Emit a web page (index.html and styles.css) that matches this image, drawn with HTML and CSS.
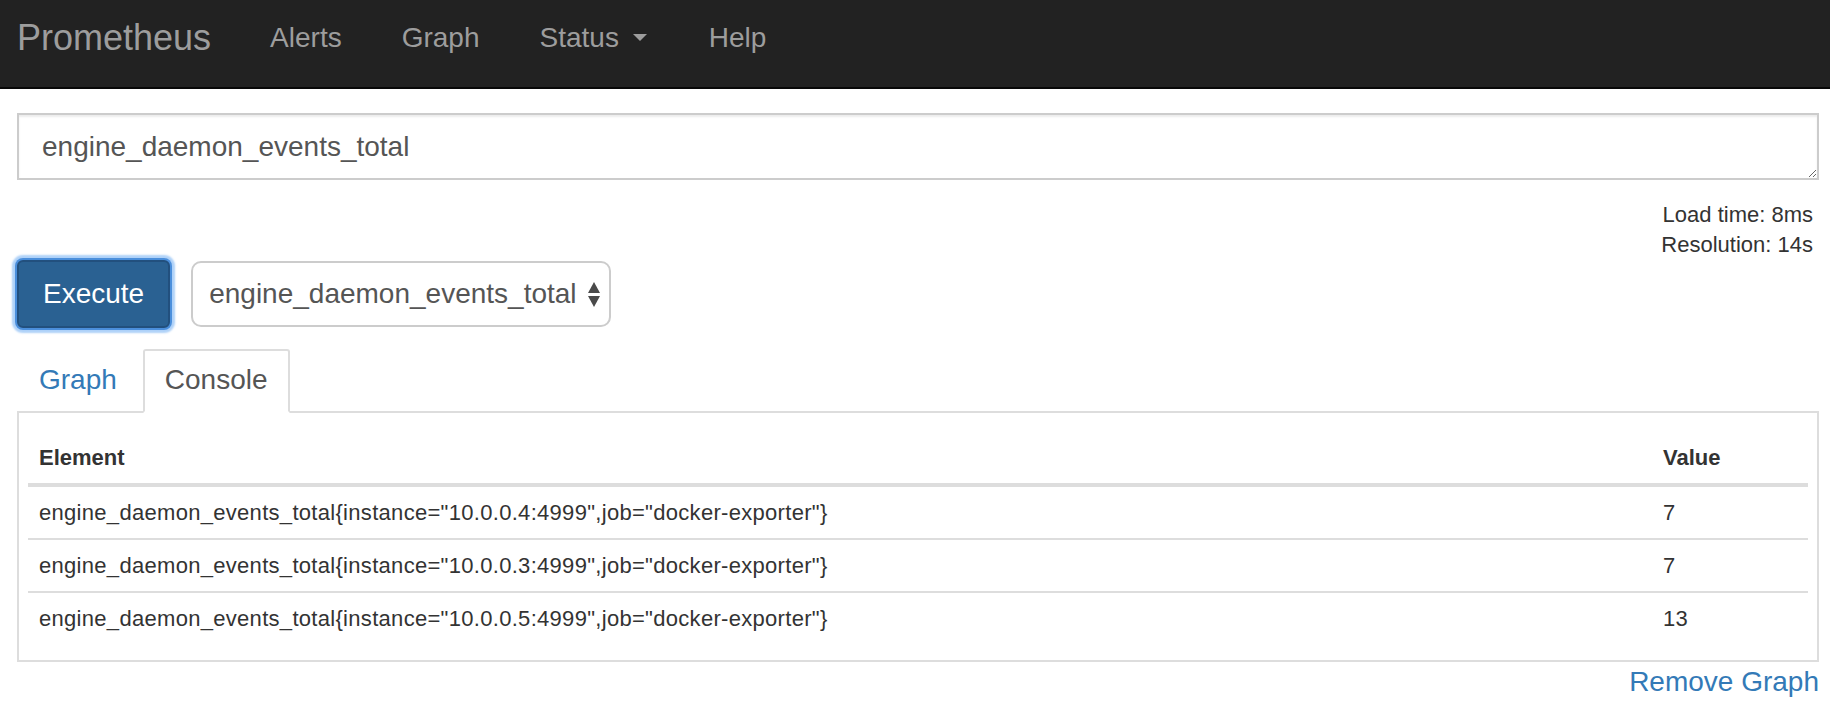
FILE: index.html
```html
<!DOCTYPE html>
<html lang="en">
<head>
<meta charset="utf-8">
<title>Prometheus Time Series Collection and Processing Server</title>
<link rel="stylesheet" href="styles.css">
</head>
<body>
<nav class="navbar">
  <a class="brand" href="#">Prometheus</a>
  <ul class="nav-links">
    <li><a href="#">Alerts</a></li>
    <li><a href="#">Graph</a></li>
    <li><a href="#">Status <span class="caret"></span></a></li>
    <li><a href="#">Help</a></li>
  </ul>
</nav>
<main class="page">
  <textarea class="expr" spellcheck="false">engine_daemon_events_total</textarea>
  <div class="eval-stats">
    <div>Load time: 8ms</div>
    <div>Resolution: 14s</div>
  </div>
  <div class="controls">
    <button class="btn-execute" type="button">Execute</button>
    <div class="metric-select">
      <span class="metric-select-text">engine_daemon_events_total</span>
      <svg class="metric-select-arrows" width="12" height="25" viewBox="0 0 12 25" aria-hidden="true">
        <polygon points="6,0 12,11 0,11" fill="#4a4a4a"/>
        <polygon points="0,14 12,14 6,25" fill="#4a4a4a"/>
      </svg>
    </div>
  </div>
  <ul class="tabs">
    <li><a href="#">Graph</a></li>
    <li class="active"><a href="#">Console</a></li>
  </ul>
  <div class="tab-panel">
    <table class="console-table">
      <thead>
        <tr><th>Element</th><th class="value-col">Value</th></tr>
      </thead>
      <tbody>
        <tr><td>engine_daemon_events_total{instance="10.0.0.4:4999",job="docker-exporter"}</td><td>7</td></tr>
        <tr><td>engine_daemon_events_total{instance="10.0.0.3:4999",job="docker-exporter"}</td><td>7</td></tr>
        <tr><td>engine_daemon_events_total{instance="10.0.0.5:4999",job="docker-exporter"}</td><td>13</td></tr>
      </tbody>
    </table>
  </div>
  <div class="remove-row"><a href="#" class="remove-link">Remove Graph</a></div>
</main>
</body>
</html>
```
FILE: styles.css
```css
html, body {
  margin: 0;
  padding: 0;
  overflow: hidden;
}
body {
  font-family: "Liberation Sans", Arial, sans-serif;
  font-size: 28px;
  line-height: 40px;
  color: #333;
  background: #fff;
}

/* navbar */
.navbar {
  display: flex;
  align-items: flex-start;
  height: 69px;
  padding: 18px 0 0 17px;
  background: #222;
  border-bottom: 2px solid #080808;
}
.brand {
  font-size: 36px;
  line-height: 40px;
  color: #9d9d9d;
  text-decoration: none;
  padding-right: 29px;
}
.nav-links {
  display: flex;
  margin: 0;
  padding: 0;
  list-style: none;
}
.nav-links a {
  display: block;
  padding: 0 30px;
  font-size: 28px;
  line-height: 40px;
  color: #9d9d9d;
  text-decoration: none;
}
.nav-links li:last-child a {
  padding-left: 32px;
}
.caret {
  display: inline-block;
  width: 0;
  height: 0;
  margin-left: 6px;
  vertical-align: middle;
  border-top: 7px solid #9d9d9d;
  border-left: 7px solid transparent;
  border-right: 7px solid transparent;
  position: relative;
  top: -2px;
}

/* page */
.page {
  padding: 0 11px 0 17px;
}
.expr {
  display: block;
  box-sizing: border-box;
  width: 100%;
  height: 67px;
  margin: 24px 0 0;
  padding: 12px 23px;
  border: 2px solid #ccc;
  border-radius: 0;
  box-shadow: inset 0 2px 2px rgba(0, 0, 0, 0.075);
  font-family: "Liberation Sans", Arial, sans-serif;
  font-size: 28px;
  line-height: 40px;
  color: #555;
  resize: vertical;
  overflow: hidden;
}
.eval-stats {
  margin: 20px 6px 0 0;
  text-align: right;
  font-size: 22px;
  line-height: 30px;
  color: #333;
}
.controls {
  display: flex;
  align-items: center;
  gap: 21px;
}
.btn-execute {
  height: 68px;
  padding: 0 24px;
  font-family: "Liberation Sans", Arial, sans-serif;
  font-size: 28px;
  color: #fff;
  background: #2a6192;
  border: 2px solid #22507e;
  border-radius: 6px;
  box-shadow: 0 0 0 2px #4b8fdc, 0 0 2px 5px rgba(140, 190, 245, 0.7);
}
.metric-select {
  display: flex;
  align-items: center;
  gap: 11px;
  height: 66px;
  box-sizing: border-box;
  padding: 0 9px 0 16px;
  border: 2px solid #ccc;
  border-radius: 10px;
  background: #fff;
  color: #555;
  font-size: 28px;
}
.metric-select-arrows {
  display: block;
}

/* tabs */
.tabs {
  display: flex;
  margin: 21px 0 0;
  padding: 0;
  list-style: none;
  border-bottom: 2px solid #ddd;
}
.tabs li {
  margin: 0 4px -2px 0;
}
.tabs a {
  display: block;
  padding: 9px 20px 11px;
  border: 2px solid transparent;
  border-radius: 3px 3px 0 0;
  font-size: 28px;
  line-height: 40px;
  color: #337ab7;
  text-decoration: none;
}
.tabs .active a {
  color: #555;
  background: #fff;
  border-color: #ddd #ddd transparent;
}
.tab-panel {
  border: 2px solid #ddd;
  border-top: 0;
  padding: 19px 9px 0;
}
.console-table {
  width: 100%;
  border-collapse: collapse;
  margin-bottom: 16px;
  font-size: 22px;
  line-height: 31px;
  color: #333;
}
.console-table th {
  text-align: left;
  font-weight: bold;
  padding: 10px 11px;
  border-bottom: 4px solid #ddd;
}
.console-table td {
  padding: 10px 11px;
  border-top: 2px solid #ddd;
  letter-spacing: 0.3px;
}
.console-table .value-col {
  width: 134px;
}
.remove-row {
  text-align: right;
  line-height: 40px;
}
.remove-link {
  color: #337ab7;
  text-decoration: none;
}
```
